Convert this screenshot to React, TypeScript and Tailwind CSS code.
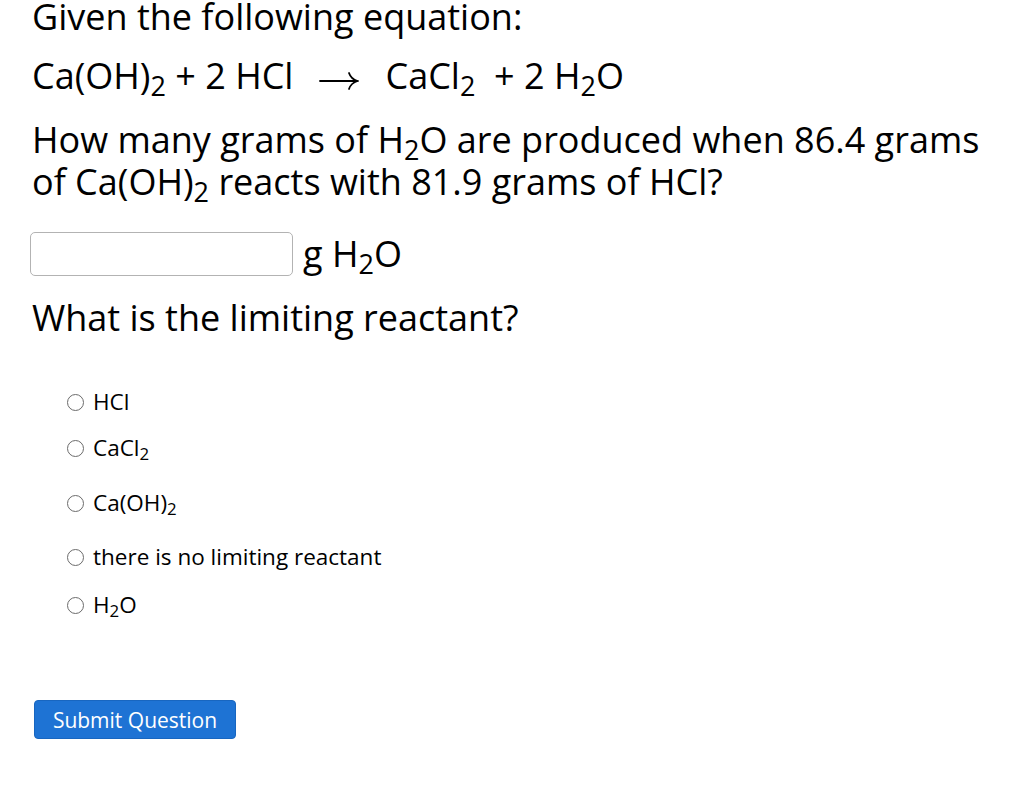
import React from 'react';

const Arrow = () => (
  <svg width="40" height="18" viewBox="0 0 40 18" className="inline-block align-baseline relative top-[1px]" fill="none" stroke="black" strokeWidth="1.8" strokeLinecap="round">
    <path d="M1 9 H38" />
    <path d="M30 1 Q32 7 38.5 9 Q32 11 30 17" />
  </svg>
);

const options: { label: React.ReactNode; gap: string }[] = [
  { label: <>HCl</>, gap: 'mt-0' },
  { label: <>CaCl<sub>2</sub></>, gap: 'mt-[18px]' },
  { label: <>Ca(OH)<sub>2</sub></>, gap: 'mt-[27px]' },
  { label: <>there is no limiting reactant</>, gap: 'mt-[26px]' },
  { label: <>H<sub>2</sub>O</>, gap: 'mt-[20px]' },
];

export default function App() {
  return (
    <div className="w-[1020px] h-[787px] bg-white text-black font-['Open_Sans',sans-serif] pl-[32px] pt-[2px] overflow-hidden">
      <p className="text-[36px] leading-[30px]">Given the following equation:</p>

      {/* reaction */}
      <p className="text-[36px] leading-[42px] mt-[23px] whitespace-nowrap">
        Ca(OH)<sub>2</sub> + 2 HCl
        <span className="inline-block mx-[26px]">
          <Arrow />
        </span>
        CaCl<sub>2</sub>&nbsp; + 2 H<sub>2</sub>O
      </p>

      <p className="text-[36px] leading-[42px] mt-[22px] whitespace-nowrap">
        How many grams of H<sub>2</sub>O are produced when 86.4 grams
        <br />
        of Ca(OH)<sub>2</sub> reacts with 81.9 grams of HCl?
      </p>

      <div className="flex items-center mt-[29px] -ml-[2px] h-[44px]">
        <input
          type="text"
          className="w-[263px] h-[44px] border border-[#b3b3b3] rounded-[5px] bg-white outline-none"
        />
        <span className="text-[36px] leading-[42px] ml-[10px]">
          g H<sub>2</sub>O
        </span>
      </div>

      <p className="text-[36px] leading-[42px] mt-[21px]">What is the limiting reactant?</p>

      <ul className="mt-[49px] ml-[35px] flex flex-col">
        {options.map((o, i) => (
          <li key={i} className={`flex items-center h-[28px] text-[22.5px] leading-[28px] ${o.gap}`}>
            <span className="w-[17px] h-[17px] rounded-full border-[1.5px] border-[#6b6b6b] mr-[9px] shrink-0" />
            <span className="whitespace-nowrap">{o.label}</span>
          </li>
        ))}
      </ul>

      <button className="block mt-[81px] ml-[2px] w-[202px] h-[39px] bg-[#1e73d4] border border-[#1866c0] rounded-[4px] text-white text-[21px] leading-[28px]">
        Submit Question
      </button>
    </div>
  );
}
